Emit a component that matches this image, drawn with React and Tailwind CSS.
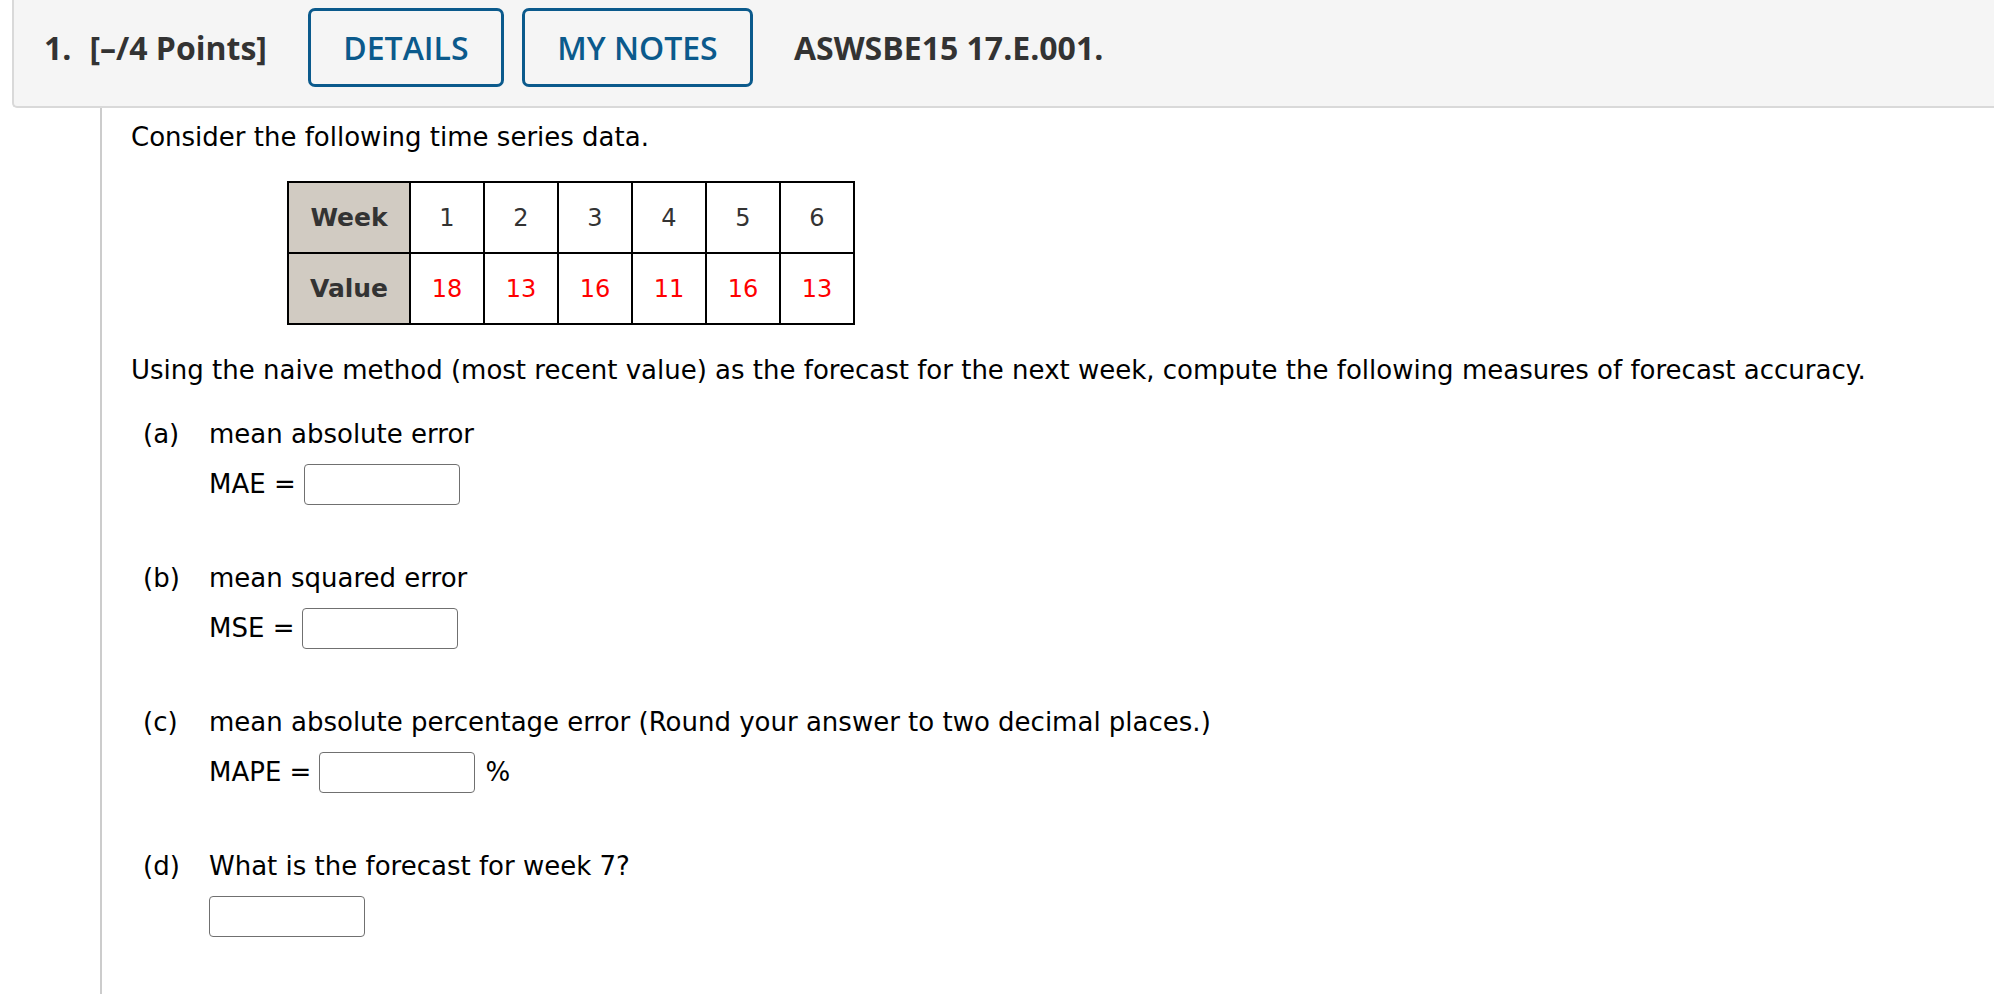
import React from "react";

const body = { fontFamily: '"DejaVu Sans", Verdana, sans-serif' };
const head = { fontFamily: '"Open Sans", "Liberation Sans", sans-serif' };

function Box({ className = "" }) {
  return (
    <div
      className={
        "w-[156px] h-[41px] border border-[#707070] rounded-[4px] bg-white " +
        className
      }
    />
  );
}

function Part({ label, text, children }) {
  return (
    <div className="flex flex-col pl-[12px]">
      <div className="flex h-[30px] items-center leading-[30px]">
        <span className="w-[66px]">{label}</span>
        <span>{text}</span>
      </div>
      <div className="flex items-center h-[41px] mt-[15px] pl-[66px]">
        {children}
      </div>
    </div>
  );
}

export default function App() {
  const weeks = [1, 2, 3, 4, 5, 6];
  const values = [18, 13, 16, 11, 16, 13];
  return (
    <div className="w-[1994px] h-[994px] bg-white overflow-hidden flex flex-col">
      <div
        className="ml-[12px] h-[108px] shrink-0 bg-[#f5f5f5] border-l-2 border-b-2 border-[#d9d9d9] rounded-bl-[5px] flex items-start pt-[8px] pl-[30px] text-[#333]"
        style={head}
      >
        <div className="flex items-center h-[79px] text-[32px] font-bold whitespace-nowrap">
          <span>1.</span>
          <span className="ml-[18px]">[–/4 Points]</span>
        </div>
        <div className="ml-[41px] w-[196px] h-[79px] border-[3px] border-[#0b5a8c] rounded-[7px] flex items-center justify-center text-[32px] font-semibold text-[#0b5a8c]">
          DETAILS
        </div>
        <div className="ml-[18px] w-[231px] h-[79px] border-[3px] border-[#0b5a8c] rounded-[7px] flex items-center justify-center text-[32px] font-semibold text-[#0b5a8c]">
          MY NOTES
        </div>
        <div className="ml-[41px] flex items-center h-[79px] text-[32px] font-bold whitespace-nowrap">
          ASWSBE15 17.E.001.
        </div>
      </div>

      <div
        className="ml-[100px] flex-1 border-l-2 border-[#cccccc] pl-[29px] pt-[14px] text-[26px] text-black"
        style={body}
      >
        <div className="leading-[30px] h-[30px]">
          Consider the following time series data.
        </div>

        <div className="mt-[29px] ml-[156px] inline-grid grid-cols-[122px_repeat(6,74px)] border-t-2 border-l-2 border-black text-[24px]">
          <div className="h-[71px] bg-[#d1cbc2] border-r-2 border-b-2 border-black flex items-center justify-center font-bold text-[25px] text-[#333]">
            Week
          </div>
          {weeks.map((w) => (
            <div
              key={"w" + w}
              className="h-[71px] border-r-2 border-b-2 border-black flex items-center justify-center text-[#333]"
            >
              {w}
            </div>
          ))}
          <div className="h-[71px] bg-[#d1cbc2] border-r-2 border-b-2 border-black flex items-center justify-center font-bold text-[25px] text-[#333]">
            Value
          </div>
          {values.map((v, i) => (
            <div
              key={"v" + i}
              className="h-[71px] border-r-2 border-b-2 border-black flex items-center justify-center text-[#ff0000]"
            >
              {v}
            </div>
          ))}
        </div>

        <div className="mt-[30px] leading-[30px] h-[30px] whitespace-nowrap">
          Using the naive method (most recent value) as the forecast for the
          next week, compute the following measures of forecast accuracy.
        </div>

        <div className="mt-[34px] flex flex-col gap-[58px]">
          <Part label="(a)" text="mean absolute error">
            <span>MAE =</span>
            <Box className="ml-[8px]" />
          </Part>
          <Part label="(b)" text="mean squared error">
            <span>MSE =</span>
            <Box className="ml-[8px]" />
          </Part>
          <Part
            label="(c)"
            text="mean absolute percentage error (Round your answer to two decimal places.)"
          >
            <span>MAPE =</span>
            <Box className="ml-[8px]" />
            <span className="ml-[10px]">%</span>
          </Part>
          <Part label="(d)" text="What is the forecast for week 7?">
            <Box />
          </Part>
        </div>
      </div>
    </div>
  );
}
